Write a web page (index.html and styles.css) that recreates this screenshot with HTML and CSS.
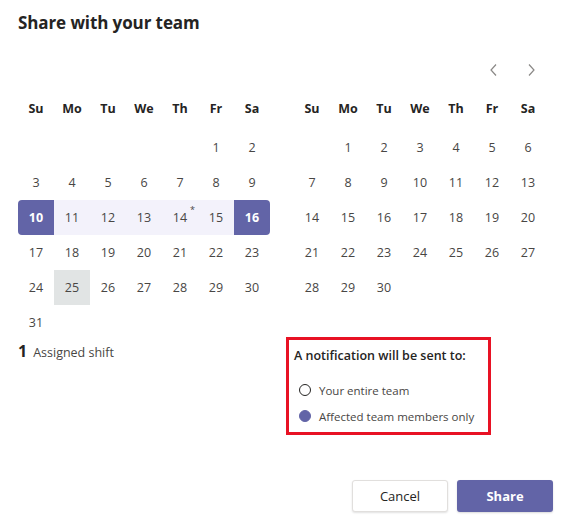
FILE: index.html
```html
<!DOCTYPE html>
<html>
<head>
<meta charset="utf-8">
<link rel="stylesheet" href="styles.css">
</head>
<body>
<div class="dialog">
  <h1 class="title">Share with your team</h1>
  <div class="nav">
    <svg class="arrow" width="12" height="14" viewBox="0 0 12 14"><path d="M8 1.5 L3 7 L8 12.5" fill="none" stroke="#8a8886" stroke-width="1.2"/></svg>
    <svg class="arrow" width="12" height="14" viewBox="0 0 12 14"><path d="M4 1.5 L9 7 L4 12.5" fill="none" stroke="#8a8886" stroke-width="1.2"/></svg>
  </div>
  <div class="calendars">
    <div class="month">
      <div class="dow">Su</div><div class="dow">Mo</div><div class="dow">Tu</div><div class="dow">We</div><div class="dow">Th</div><div class="dow">Fr</div><div class="dow">Sa</div>
      <div class="day"></div><div class="day"></div><div class="day"></div><div class="day"></div><div class="day"></div><div class="day">1</div><div class="day">2</div>
      <div class="day">3</div><div class="day">4</div><div class="day">5</div><div class="day">6</div><div class="day">7</div><div class="day">8</div><div class="day">9</div>
      <div class="day sel first">10</div><div class="day range">11</div><div class="day range">12</div><div class="day range">13</div><div class="day range mark">14<span class="star">*</span></div><div class="day range">15</div><div class="day sel last">16</div>
      <div class="day">17</div><div class="day">18</div><div class="day">19</div><div class="day">20</div><div class="day">21</div><div class="day">22</div><div class="day">23</div>
      <div class="day">24</div><div class="day today">25</div><div class="day">26</div><div class="day">27</div><div class="day">28</div><div class="day">29</div><div class="day">30</div>
      <div class="day">31</div>
    </div>
    <div class="month">
      <div class="dow">Su</div><div class="dow">Mo</div><div class="dow">Tu</div><div class="dow">We</div><div class="dow">Th</div><div class="dow">Fr</div><div class="dow">Sa</div>
      <div class="day"></div><div class="day">1</div><div class="day">2</div><div class="day">3</div><div class="day">4</div><div class="day">5</div><div class="day">6</div>
      <div class="day">7</div><div class="day">8</div><div class="day">9</div><div class="day">10</div><div class="day">11</div><div class="day">12</div><div class="day">13</div>
      <div class="day">14</div><div class="day">15</div><div class="day">16</div><div class="day">17</div><div class="day">18</div><div class="day">19</div><div class="day">20</div>
      <div class="day">21</div><div class="day">22</div><div class="day">23</div><div class="day">24</div><div class="day">25</div><div class="day">26</div><div class="day">27</div>
      <div class="day">28</div><div class="day">29</div><div class="day">30</div>
    </div>
  </div>
  <div class="bottom">
    <div class="summary"><span class="count">1</span><span class="label">Assigned shift</span></div>
    <div class="notify">
      <div class="notify-title">A notification will be sent to:</div>
      <div class="option"><span class="radio"></span><span>Your entire team</span></div>
      <div class="option"><span class="radio checked"></span><span>Affected team members only</span></div>
    </div>
  </div>
  <div class="actions">
    <button class="btn cancel">Cancel</button>
    <button class="btn primary">Share</button>
  </div>
</div>
</body>
</html>
```
FILE: styles.css
```css
* { box-sizing: border-box; }
html, body { margin: 0; padding: 0; background: #fff; }
body {
  font-family: "Segoe UI", "Open Sans", "Noto Sans", sans-serif;
  color: #252423;
  width: 563px;
  height: 531px;
  overflow: hidden;
}
.dialog { padding: 11px 10px 0 18px; }
.title {
  margin: 0;
  font-size: 17px;
  font-weight: 700;
  line-height: 24px;
  letter-spacing: -0.1px;
}
.nav {
  display: flex;
  justify-content: flex-end;
  gap: 25px;
  margin-top: 25px;
  padding-right: 16px;
  height: 20px;
  align-items: center;
}
.arrow { display: block; }
.calendars {
  display: flex;
  gap: 24px;
  margin-top: 13px;
}
.month {
  display: grid;
  grid-template-columns: repeat(7, 36px);
  grid-template-rows: 37px;
  grid-auto-rows: 35px;
  width: 252px;
  align-content: start;
  height: 247px;
}
.dow {
  font-size: 12.5px;
  font-weight: 700;
  display: flex;
  align-items: center;
  justify-content: center;
  height: 30px;
}
.month .dow { grid-row: 1; }
.day {
  font-size: 12.5px;
  color: #484644;
  display: flex;
  align-items: center;
  justify-content: center;
  position: relative;
}
.range { background: #f3f2fb; }
.sel { background: #6264a7; color: #fff; font-weight: 700; }
.first { border-radius: 4px 0 0 4px; }
.last { border-radius: 0 4px 4px 0; }
.today { background: #e1e4e4; }
.star {
  position: absolute;
  top: 5px;
  right: 3px;
  font-size: 9px;
  line-height: 9px;
  color: #484644;
}
.bottom {
  display: flex;
  gap: 16px;
}
.summary {
  width: 252px;
  display: flex;
  align-items: baseline;
  gap: 6px;
  padding-top: 0;
}
.count { font-size: 16px; font-weight: 700; }
.label { font-size: 12.5px; color: #484644; }
.notify {
  border: 3px solid #e81224;
  width: 205px;
  height: 98px;
  margin-top: -3px;
  padding: 6px 0 0 5px;
}
.notify-title {
  font-size: 12.5px;
  font-weight: 600;
  line-height: 20px;
  margin-bottom: 14px;
}
.option {
  display: flex;
  align-items: center;
  gap: 8px;
  font-size: 11.5px;
  color: #484644;
  height: 20px;
  margin-bottom: 6px;
  padding-left: 5px;
}
.radio {
  width: 12px;
  height: 12px;
  border-radius: 50%;
  border: 1px solid #252423;
  flex: none;
}
.radio.checked { background: #6264a7; border-color: #6264a7; }
.actions {
  display: flex;
  justify-content: flex-end;
  gap: 9px;
  margin-top: 45px;
}
.btn {
  width: 96px;
  height: 32px;
  font-family: inherit;
  font-size: 13px;
  border-radius: 3px;
  cursor: pointer;
}
.cancel {
  background: #fff;
  border: 1px solid #e1dfdd;
  color: #252423;
  box-shadow: 0 1px 2px rgba(0,0,0,0.12);
}
.primary {
  background: #6264a7;
  border: none;
  color: #fff;
  font-weight: 700;
  box-shadow: 0 1px 2px rgba(0,0,0,0.15);
}
```
